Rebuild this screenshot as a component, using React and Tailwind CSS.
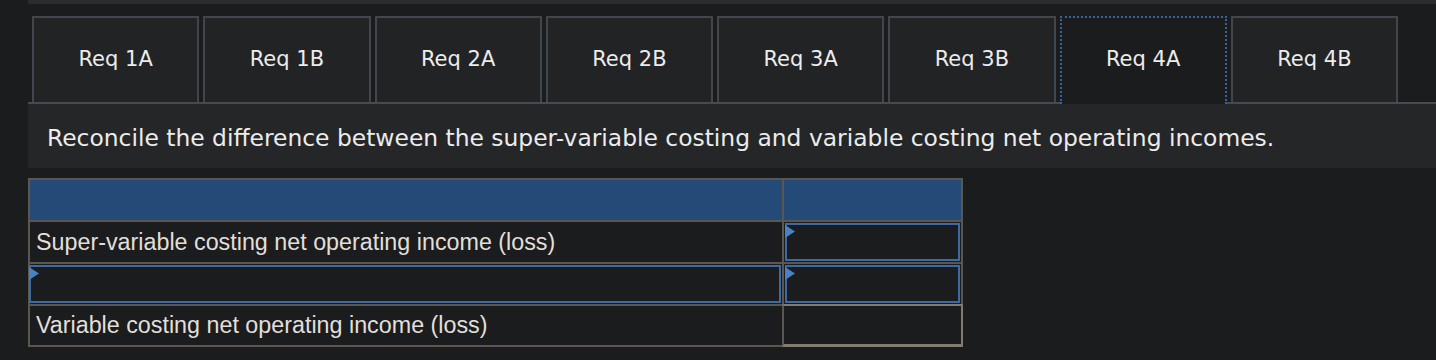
const tabs = ["Req 1A", "Req 1B", "Req 2A", "Req 2B", "Req 3A", "Req 3B", "Req 4A", "Req 4B"];

function Flag() {
  return (
    <svg className="absolute -left-[2px] top-0" width="10" height="13" viewBox="0 0 10 13">
      <path d="M0 0 L10 6.5 L0 13 Z" fill="#4a80c4" />
    </svg>
  );
}

function InputCell({ className = "" }) {
  return (
    <div className={`relative m-[1px] h-[38px] border-2 border-[#3d6aa2] bg-[#1b1c1e] ${className}`}>
      <Flag />
    </div>
  );
}

export default function App() {
  return (
    <div className="flex h-[360px] w-full bg-[#1b1c1e] font-['DejaVu_Sans',sans-serif]">
      <div className="w-[28px] shrink-0" />
      <div className="flex flex-1 flex-col">
        <div className="h-[4px] bg-[#2b2c2e]" />

        {/* tabs */}
        <div className="mt-[12px] flex gap-[4px] pl-[4px] pr-[38px]">
          {tabs.map((t) =>
            t === "Req 4A" ? (
              <div
                key={t}
                className="relative z-10 -mb-[2px] flex h-[88px] flex-1 items-center justify-center border-2 border-b-0 border-dotted border-[#3a6296] bg-[#1b1c1e] pb-[2px] text-[21px] text-[#ececec]"
              >
                {t}
              </div>
            ) : (
              <div
                key={t}
                className="flex h-[86px] flex-1 items-center justify-center border-2 border-b-0 border-[#40464a] bg-[#222325] text-[21px] text-[#ececec]"
              >
                {t}
              </div>
            )
          )}
        </div>
        <div className="h-[2px] bg-[#454b4e]" />

        {/* instructions */}
        <div className="flex h-[64px] items-center bg-[#252628] pl-[19px] pt-[5px] text-[23.4px] text-[#ececec]">
          Reconcile the difference between the super-variable costing and variable costing net operating incomes.
        </div>

        {/* table */}
        <div className="mt-[10px] w-[935px] border-2 border-[#5b5750] font-['Liberation_Sans',Arial,sans-serif] text-[23.3px] text-[#e2dfda]">
          <div className="flex h-[40px] bg-[#244a78]">
            <div className="flex-1" />
            <div className="w-[179px] border-l-2 border-[#5b5750]" />
          </div>
          <div className="flex h-[42px] border-t-2 border-[#5b5750] bg-[#1b1c1e]">
            <div className="flex flex-1 items-center pl-[6px]">Super-variable costing net operating income (loss)</div>
            <div className="w-[179px] border-l-2 border-[#5b5750]">
              <InputCell />
            </div>
          </div>
          <div className="flex h-[42px] border-t-2 border-[#5b5750] bg-[#1b1c1e]">
            <div className="flex-1">
              <InputCell className="-ml-[1px]" />
            </div>
            <div className="w-[179px] border-l-2 border-[#5b5750]">
              <InputCell />
            </div>
          </div>
          <div className="flex h-[41px] border-t-2 border-[#5b5750] bg-[#1b1c1e]">
            <div className="flex flex-1 items-center pl-[6px]">Variable costing net operating income (loss)</div>
            <div className="-mb-[2px] -mr-[2px] -mt-[2px] w-[181px] border-b-[3px] border-l-2 border-r-2 border-t-2 border-[#827b70] border-l-[#5b5750]" />
          </div>
        </div>
      </div>
    </div>
  );
}
